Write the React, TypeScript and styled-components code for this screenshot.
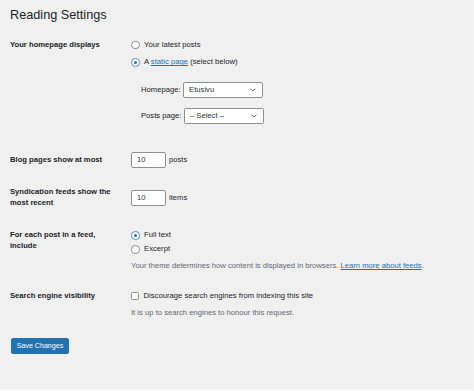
import React from 'react';
import styled, { createGlobalStyle } from 'styled-components';

const GlobalStyle = createGlobalStyle`
  html, body {
    margin: 0;
    padding: 0;
    height: 100%;
    background: #f7f7f8;
  }
  body {
    font-family: "Liberation Sans", Arial, sans-serif;
    color: #1d2327;
  }
`;

const Page = styled.div`
  box-sizing: border-box;
  height: 100vh;
  background: #f0f0f1;
  border-right: 1px solid #f8f8f9;
  border-bottom: 2px solid #f8f8f9;
  padding: 7px 0 0 10px;
`;

const Title = styled.h1`
  margin: 0;
  font-size: 12.7px;
  line-height: 16px;
  font-weight: 400;
  color: #1d2327;
`;

const Row = styled.div<{ $space: number; $align?: 'start' | 'center' }>`
  display: grid;
  grid-template-columns: 121px 1fr;
  align-items: ${(p) => p.$align || 'start'};
  margin-top: ${(p) => p.$space}px;
`;

const Label = styled.div`
  font-size: 7.65px;
  line-height: 10.4px;
  font-weight: 700;
  padding-right: 10px;
`;

const Field = styled.div`
  display: flex;
  flex-direction: column;
  align-items: flex-start;
`;

const Line = styled.div<{ $gap?: number }>`
  display: flex;
  align-items: center;
  gap: 4.5px;
  height: 10.4px;
  font-size: 7.7px;
  line-height: 10.4px;
  margin-top: ${(p) => p.$gap || 0}px;
  white-space: nowrap;
`;

const Radio = styled.span<{ $checked?: boolean }>`
  box-sizing: border-box;
  width: 8.5px;
  height: 8.5px;
  border-radius: 50%;
  background: #fff;
  border: 1px solid ${(p) => (p.$checked ? '#5b8fc0' : '#8c8f94')};
  display: flex;
  align-items: center;
  justify-content: center;
  flex: none;
  &::after {
    content: '';
    display: ${(p) => (p.$checked ? 'block' : 'none')};
    width: 3.4px;
    height: 3.4px;
    border-radius: 50%;
    background: #2271b1;
  }
`;

const Checkbox = styled.span`
  box-sizing: border-box;
  width: 8px;
  height: 8px;
  border-radius: 1.5px;
  background: #fff;
  border: 1px solid #8c8f94;
  flex: none;
`;

const A = styled.span`
  color: #2271b1;
  text-decoration: underline;
  text-underline-offset: 1px;
`;

const PickRow = styled.div<{ $gap: number }>`
  display: flex;
  align-items: center;
  gap: 2.6px;
  margin-top: ${(p) => p.$gap}px;
  margin-left: 10px;
  font-size: 7.65px;
  line-height: 10.4px;
  white-space: nowrap;
`;

const Select = styled.div`
  box-sizing: border-box;
  width: 80px;
  height: 16px;
  background: #fff;
  border: 1px solid #8c8f94;
  border-radius: 2px;
  display: flex;
  align-items: center;
  justify-content: space-between;
  padding: 0 6px 0 5px;
  font-size: 7.65px;
  color: #2c3338;
`;

const Inline = styled.div`
  display: flex;
  align-items: center;
  gap: 3px;
  font-size: 7.65px;
  line-height: 10.4px;
`;

const Input = styled.div`
  box-sizing: border-box;
  width: 35px;
  height: 16px;
  background: #fff;
  border: 1px solid #8c8f94;
  border-radius: 2px;
  padding: 0 5px;
  display: flex;
  align-items: center;
  font-size: 7.65px;
  color: #2c3338;
`;

const Note = styled.p<{ $gap: number }>`
  margin: ${(p) => p.$gap}px 0 0;
  font-size: 7.65px;
  line-height: 10.4px;
  color: #646970;
  white-space: nowrap;
`;

const Button = styled.button`
  box-sizing: border-box;
  margin: 19.5px 0 0 1px;
  width: 58px;
  height: 16px;
  padding: 0;
  border: 1px solid #2271b1;
  border-radius: 2px;
  background: #2271b1;
  color: #fff;
  font-family: "Liberation Sans", Arial, sans-serif;
  font-size: 7.1px;
  line-height: 14px;
  display: block;
`;

const Chevron = () => (
  <svg width="6" height="4" viewBox="0 0 6 4" fill="none">
    <path d="M0.6 0.7 L3 3.1 L5.4 0.7" stroke="#50575e" strokeWidth="0.9" />
  </svg>
);

export default function App() {
  return (
    <>
      <GlobalStyle />
      <Page>
        <Title>Reading Settings</Title>

        <Row $space={17}>
          <Label>Your homepage displays</Label>
          <Field>
            <Line>
              <Radio />
              Your latest posts
            </Line>
            <Line $gap={6.8}>
              <Radio $checked />
              <span>
                A <A>static page</A> (select below)
              </span>
            </Line>
            <PickRow $gap={14.8}>
              Homepage:
              <Select>
                Etusivu
                <Chevron />
              </Select>
            </PickRow>
            <PickRow $gap={10}>
              Posts page:
              <Select>
                – Select –
                <Chevron />
              </Select>
            </PickRow>
          </Field>
        </Row>

        <Row $space={28} $align="center">
          <Label>Blog pages show at most</Label>
          <Inline>
            <Input>10</Input>
            posts
          </Inline>
        </Row>

        <Row $space={19} $align="center">
          <Label>
            Syndication feeds show the
            <br />
            most recent
          </Label>
          <Inline>
            <Input>10</Input>
            items
          </Inline>
        </Row>

        <Row $space={22}>
          <Label>
            For each post in a feed,
            <br />
            include
          </Label>
          <Field>
            <Line>
              <Radio $checked />
              Full text
            </Line>
            <Line $gap={3.6}>
              <Radio />
              Excerpt
            </Line>
            <Note $gap={6.6}>
              Your theme determines how content is displayed in browsers.{' '}
              <A>Learn more about feeds</A>.
            </Note>
          </Field>
        </Row>

        <Row $space={19.5}>
          <Label>Search engine visibility</Label>
          <Field>
            <Line>
              <Checkbox />
              Discourage search engines from indexing this site
            </Line>
            <Note $gap={6.6}>It is up to search engines to honour this request.</Note>
          </Field>
        </Row>

        <Button>Save Changes</Button>
      </Page>
    </>
  );
}
